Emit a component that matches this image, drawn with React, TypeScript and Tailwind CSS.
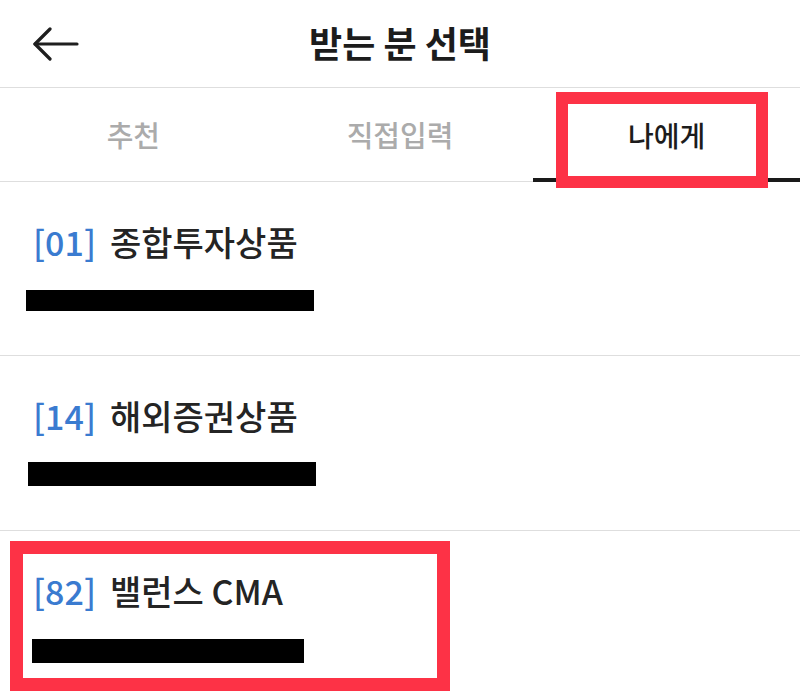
import { useState } from "react";

const accounts = [
  { code: "01", name: "종합투자상품", bar: "ml-[-7px] w-[288px] h-[21px] mt-[28px]" },
  { code: "14", name: "해외증권상품", bar: "ml-[-5px] w-[288px] h-[24px] mt-[26px]" },
  { code: "82", name: "밸런스 CMA", bar: "ml-[-1px] w-[272px] h-[24px] mt-[28px]" },
];

const tabs = ["추천", "직접입력", "나에게"];

const BackArrow = () => (
  <svg width="47" height="34" viewBox="0 0 47 34" fill="none" stroke="#1f1f1f" strokeWidth="3.2" strokeLinecap="round" strokeLinejoin="round">
    <path d="M3 17H45" />
    <path d="M18 2L3 17L18 32" />
  </svg>
);

const App = () => {
  const [active, setActive] = useState(2);

  return (
    <div
      className="relative min-h-screen w-[800px] bg-white text-[#222]"
      style={{ fontFamily: '"Noto Sans CJK KR", "Noto Sans", sans-serif' }}
    >
      {/* header */}
      <div className="grid h-[88px] grid-cols-[1fr_auto_1fr] items-center border-b border-[#dedede] px-8">
        <button className="flex items-center">
          <BackArrow />
        </button>
        <h1 className="pb-1 text-[36px] font-bold leading-none text-[#1c1c1c]">받는 분 선택</h1>
        <div />
      </div>

      {/* tabs */}
      <div className="grid h-[94px] grid-cols-3 border-b border-[#dedede]">
        {tabs.map((tab, i) => (
          <button
            key={tab}
            onClick={() => setActive(i)}
            className={
              i === active
                ? "relative flex items-center justify-center text-[28px] font-medium text-[#1c1c1c]"
                : "relative flex items-center justify-center text-[29px] font-medium text-[#ababab]"
            }
          >
            {tab}
            {i === active && <span className="absolute inset-x-0 bottom-[-1px] h-[4px] bg-[#1a1a1a]" />}
          </button>
        ))}
      </div>

      {/* account list */}
      <ul>
        {accounts.map((acc) => (
          <li key={acc.code} className="border-b border-[#dedede] pl-[33px] pt-[40px] pb-[44px]">
            <div className="flex h-[40px] items-center text-[34px] font-medium leading-none">
              <span className="text-[#3a7bd0]">[{acc.code}]</span>
              <span className="ml-[14px] text-[#242424]">{acc.name}</span>
            </div>
            <div className={"bg-black " + acc.bar} />
          </li>
        ))}
      </ul>

      {/* highlight boxes */}
      <div className="pointer-events-none absolute left-[556px] top-[92px] h-[96px] w-[212px] border-[12px] border-[#fd3246]" />
      <div className="pointer-events-none absolute left-[10px] top-[541px] h-[150px] w-[440px] border-[13px] border-[#fd3246]" />
    </div>
  );
};

export default App;
